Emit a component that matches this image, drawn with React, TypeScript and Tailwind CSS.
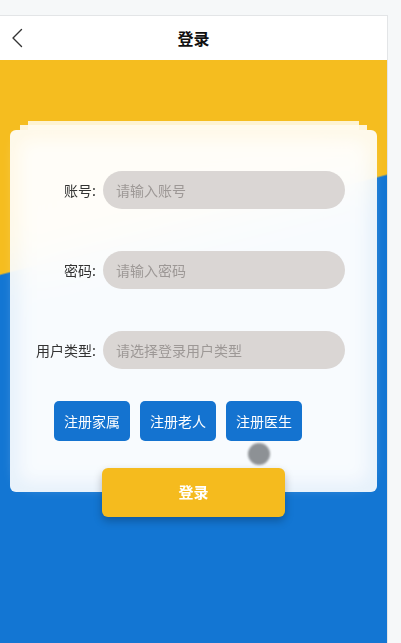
import React from "react";

const font = { fontFamily: '"Noto Sans CJK SC", "Noto Sans", sans-serif' };

function Field({ label, placeholder }: { label: string; placeholder: string }) {
  return (
    <div className="flex items-center">
      <div className="w-[87px] text-right text-[14px] text-[#333] pr-[1px]">{label}</div>
      <div className="ml-[6px] w-[242px] h-[38px] rounded-full bg-[#dad6d4] flex items-center pl-[13px] text-[14px] text-[#9d9896]">
        {placeholder}
      </div>
    </div>
  );
}

export default function App() {
  return (
    <div className="w-[401px] h-[643px] bg-[#f6f8f9] pt-[15px] overflow-hidden" style={font}>
      <div className="w-[388px] h-[628px] border-t border-r border-[#e3e5e7] bg-white flex flex-col">
        <header className="h-[44px] bg-white grid grid-cols-[60px_1fr_60px] items-center">
          <div className="pl-[11px] flex items-center">
            <svg width="12" height="20" viewBox="0 0 12 20" fill="none">
              <polyline points="10.5,1.5 2,10 10.5,18.5" stroke="#333" strokeWidth="1.4" strokeLinecap="round" strokeLinejoin="round" />
            </svg>
          </div>
          <div className="text-center text-[16px] font-bold text-[#111]">登录</div>
          <div />
        </header>
        <main className="flex-1 bg-[linear-gradient(165.5deg,#f5bd1f_207px,#1376d3_209px)] px-[10px] pt-[70px]">
          <div className="relative rounded-[6px] bg-white/[0.9] backdrop-blur-[24px] h-[362px] pt-[41px] shadow-[0_-15px_0_-10px_rgba(255,251,238,0.9),0_-27px_0_-18px_rgba(255,250,236,0.88),inset_0_0_10px_rgba(255,255,255,0.15)]">
            <div className="absolute inset-[10px] rounded-[10px] bg-white/70 blur-[8px]" />
            <div className="relative flex flex-col gap-[42px]">
              <Field label="账号:" placeholder="请输入账号" />
              <Field label="密码:" placeholder="请输入密码" />
              <Field label="用户类型:" placeholder="请选择登录用户类型" />
            </div>
            <div className="relative mt-[32px] pl-[44px] flex gap-[10px]">
              <button className="w-[76px] h-[40px] rounded-[5px] bg-[#1473d0] text-white text-[14px]">注册家属</button>
              <button className="w-[76px] h-[40px] rounded-[5px] bg-[#1473d0] text-white text-[14px]">注册老人</button>
              <button className="w-[76px] h-[40px] rounded-[5px] bg-[#1473d0] text-white text-[14px]">注册医生</button>
            </div>
            <div className="absolute left-[238px] top-[313px] w-[22px] h-[22px] rounded-full bg-[#8d9195] blur-[1px] z-20" />
          </div>
          <div className="relative z-10 -mt-[24px] mx-auto w-[183px] h-[49px] rounded-[6px] bg-[#f5bb1e] flex items-center justify-center text-white text-[15px] font-bold shadow-[0_4px_8px_rgba(0,0,0,0.25)]">
            登录
          </div>
        </main>
      </div>
    </div>
  );
}
